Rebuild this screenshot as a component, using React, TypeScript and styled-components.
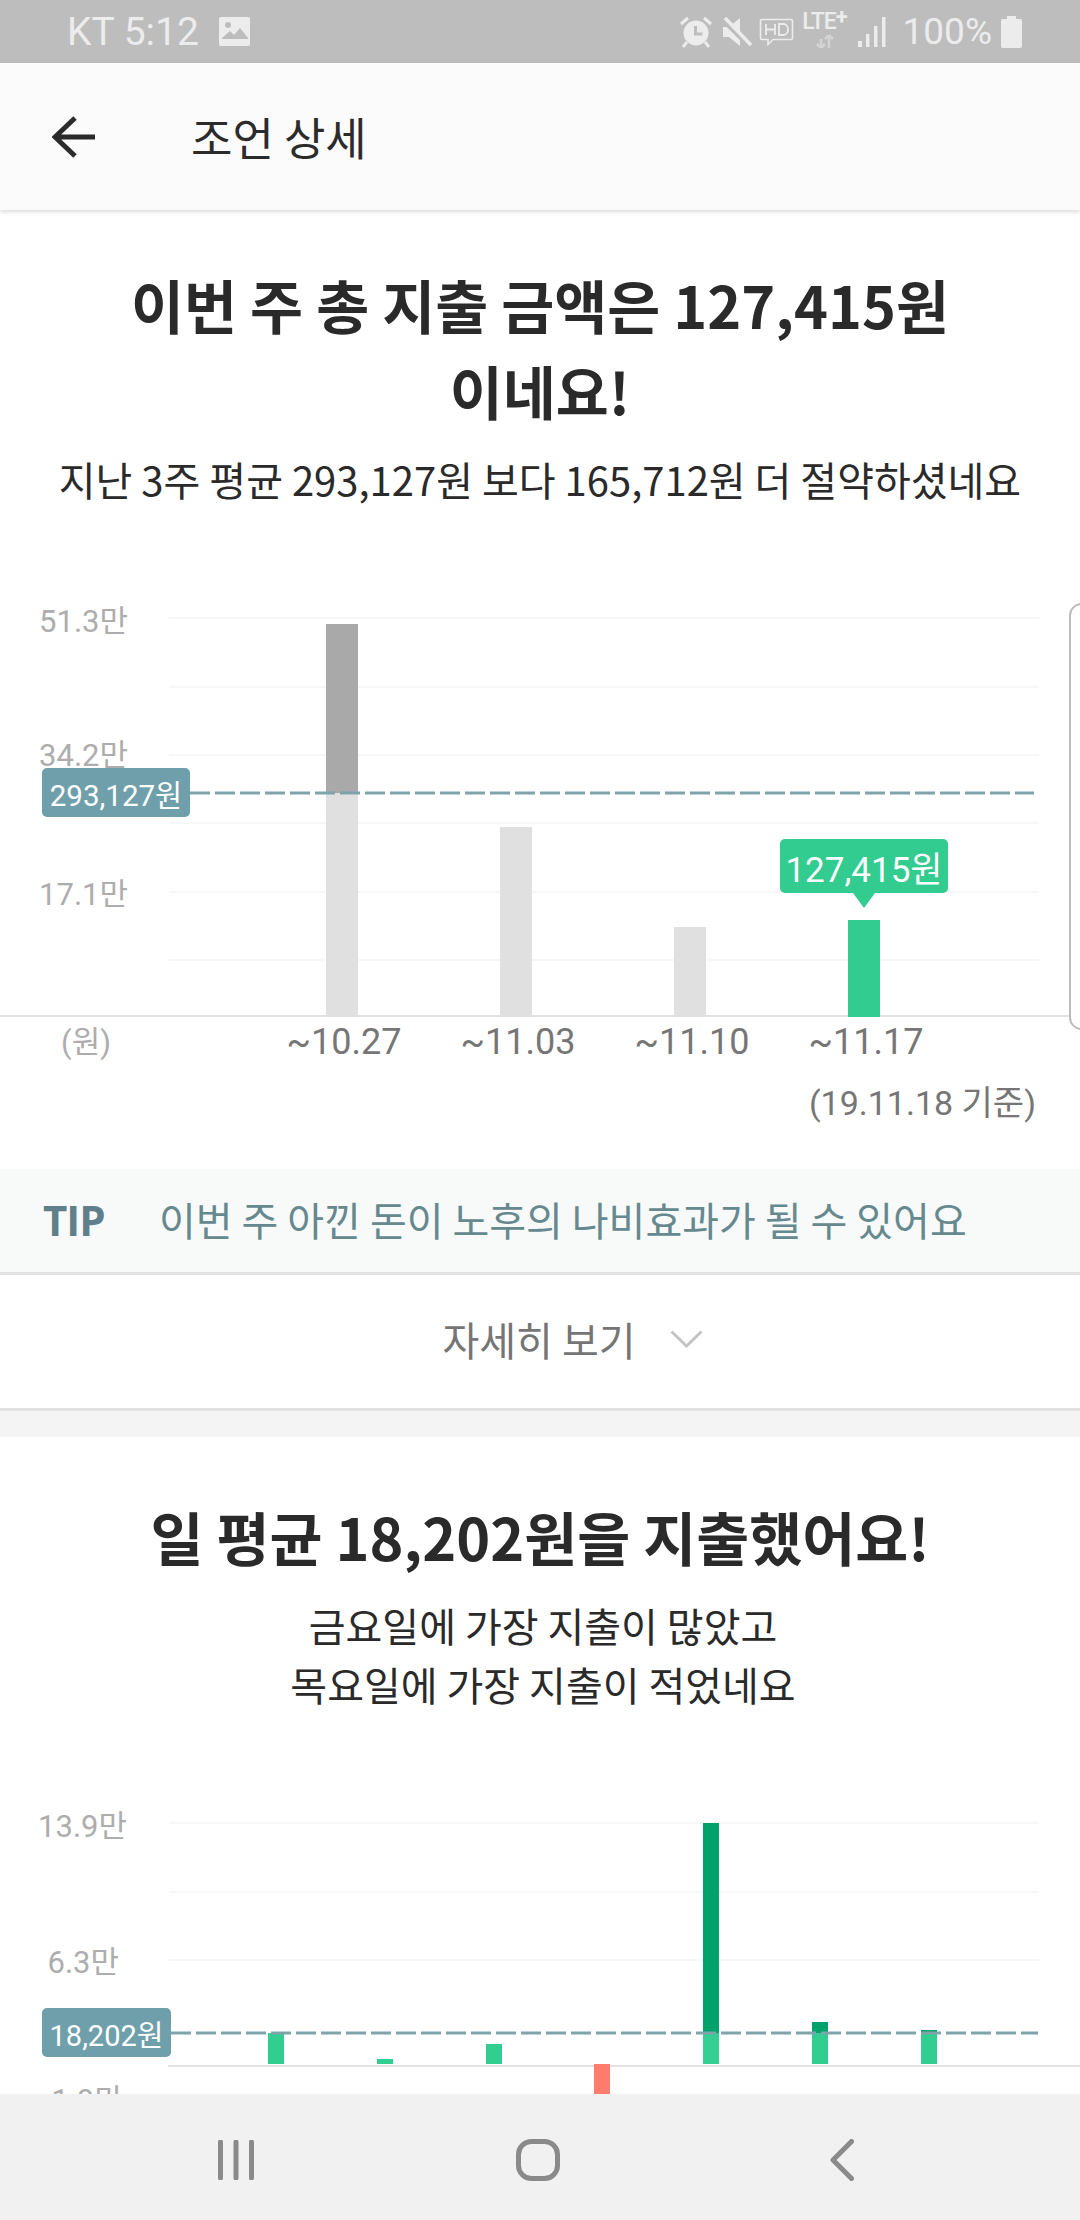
import * as React from 'react';
import styled, { createGlobalStyle } from 'styled-components';

const GlobalStyle = createGlobalStyle`
  html, body {
    margin: 0;
    padding: 0;
    background: #ffffff;
  }
  * {
    box-sizing: border-box;
  }
`;

const KR = `"Noto Sans CJK KR", "Noto Sans", sans-serif`;
const NUM = `Roboto, "Noto Sans CJK KR", sans-serif`;

const Screen = styled.div`
  width: 1080px;
  height: 2220px;
  display: flex;
  flex-direction: column;
  overflow: hidden;
  font-family: ${KR};
  background: #ffffff;
  position: relative;
`;

const StatusBar = styled.div`
  height: 63px;
  flex: none;
  display: flex;
  align-items: center;
  padding: 0 58px 0 67px;
  background: #bdbdbd;
  color: #ececec;
  font-family: ${NUM};
  font-size: 39px;
`;

const Carrier = styled.span`
  margin-right: 20px;
`;

const StatusRight = styled.div`
  margin-left: auto;
  display: flex;
  align-items: center;
`;

const Percent = styled.span`
  margin: 0 9px 0 17px;
  font-size: 37px;
`;

const LteBox = styled.div`
  width: 50px;
  height: 46px;
  margin: 0 8px 0 6px;
  display: flex;
  flex-direction: column;
  align-items: center;
`;

const LteText = styled.span`
  font-size: 23px;
  line-height: 26px;
  font-weight: 500;
  letter-spacing: -1px;
`;

const LtePlus = styled.span`
  position: relative;
  top: -5px;
  font-size: 22px;
  font-weight: 700;
`;

const Header = styled.header`
  height: 147px;
  flex: none;
  display: flex;
  align-items: center;
  padding-left: 52px;
  background: #fbfbfb;
  box-shadow: 0 2px 4px rgba(0, 0, 0, 0.14);
  position: relative;
  z-index: 2;
`;

const HeaderTitle = styled.h1`
  margin: 0 0 0 95px;
  font-size: 45px;
  font-weight: 400;
  color: #2b2b2b;
`;

const Scroller = styled.main`
  flex: 1;
  min-height: 0;
  overflow: hidden;
`;

const Section = styled.section<{ $top: number }>`
  padding-top: ${(p) => p.$top}px;
  background: #ffffff;
`;

const Title = styled.h2`
  margin: 0 auto;
  width: 860px;
  text-align: center;
  font-size: 57.6px;
  line-height: 86px;
  font-weight: 700;
  color: #2a2a2a;
`;

const Lead = styled.p<{ $shift?: number }>`
  margin: 17px 0 0;
  padding-left: ${(p) => p.$shift ?? 0}px;
  text-align: center;
  font-size: 40px;
  line-height: 59px;
  color: #2a2a2a;
`;

const ChartWrap = styled.div<{ $height: number; $top: number }>`
  position: relative;
  height: ${(p) => p.$height}px;
  margin-top: ${(p) => p.$top}px;
`;

const ChartSvg = styled.svg`
  display: block;
  width: 1080px;
  height: 100%;
`;

const AxisLabel = styled.text`
  font-family: ${NUM};
  font-size: 31px;
  fill: #adadad;
  dominant-baseline: central;
`;

const DateLabel = styled.text<{ $size?: number }>`
  font-family: ${NUM};
  font-size: ${(p) => p.$size ?? 36}px;
  fill: #767676;
  dominant-baseline: central;
`;

const Badge = styled.div<{ $left: number; $top: number; $width: number; $height: number; $bg: string; $size: number }>`
  position: absolute;
  left: ${(p) => p.$left}px;
  top: ${(p) => p.$top}px;
  width: ${(p) => p.$width}px;
  height: ${(p) => p.$height}px;
  display: flex;
  align-items: center;
  justify-content: center;
  border-radius: 5px;
  background: ${(p) => p.$bg};
  color: #ffffff;
  font-family: ${NUM};
  font-size: ${(p) => p.$size}px;
  white-space: nowrap;
`;

const BadgeTail = styled.span`
  position: absolute;
  left: 50%;
  top: 100%;
  margin-left: -11px;
  border-left: 11px solid transparent;
  border-right: 11px solid transparent;
  border-top: 15px solid #32cb90;
`;

const EdgeHandle = styled.div`
  position: absolute;
  right: -14px;
  top: 603px;
  width: 25px;
  height: 427px;
  border: 2px solid #bcbcbc;
  border-radius: 16px;
  background: transparent;
  z-index: 1;
`;

const TipBar = styled.div`
  height: 106px;
  display: flex;
  align-items: center;
  padding: 0 0 3px 43px;
  background: #f8fafa;
  border-bottom: 3px solid #e2e2e2;
`;

const TipTag = styled.strong`
  width: 116px;
  font-family: "Open Sans", sans-serif;
  font-size: 42px;
  font-weight: 700;
  letter-spacing: -1px;
  color: #5f808b;
`;

const TipText = styled.span`
  font-size: 40px;
  color: #66898f;
`;

const MoreRow = styled.div`
  height: 136px;
  display: flex;
  align-items: center;
  justify-content: center;
  gap: 35px;
  padding: 0 0 5px 66px;
  border-bottom: 3px solid #e2e2e2;
  font-size: 40px;
  color: #757575;
`;

const Gap = styled.div`
  height: 26px;
  background: #f4f4f4;
`;

const NavBar = styled.nav`
  height: 126px;
  flex: none;
  display: flex;
  align-items: center;
  padding: 6px 0 0 218px;
  background: #f1f1f1;
  position: relative;
  z-index: 2;
`;

const NavIcon = styled.svg<{ $gap: number }>`
  flex: none;
  margin-right: ${(p) => p.$gap}px;
`;

const StatusIcon = styled.svg<{ $ml?: number }>`
  flex: none;
  margin-left: ${(p) => p.$ml ?? 0}px;
`;

interface BarData {
  x: number;
  top: number;
  bottom: number;
  color: string;
  over?: { top: number; color: string };
}

interface ChartProps {
  bars: BarData[];
  barWidth: number;
  grid: number[];
  gridEnd: number;
  axisX: number;
  axisY: number;
  axisEnd: number;
  avgY: number;
  avgX: number;
  avgEnd: number;
  height: number;
  children?: React.ReactNode;
}

const BarChart = ({ bars, barWidth, grid, gridEnd, axisX, axisY, axisEnd, avgY, avgX, avgEnd, height, children }: ChartProps) => (
  <ChartSvg viewBox={`0 0 1080 ${height}`}>
    {grid.map((y) => (
      <line key={y} x1={169} x2={gridEnd} y1={y} y2={y} stroke="#f5f5f5" strokeWidth={1.5} />
    ))}
    <line x1={axisX} x2={axisEnd} y1={axisY} y2={axisY} stroke="#e2e2e2" strokeWidth={2} />
    {bars.map((b) => (
      <g key={b.x}>
        <rect x={b.x} y={b.top} width={barWidth} height={b.bottom - b.top} fill={b.color} />
        {b.over && <rect x={b.x} y={b.over.top} width={barWidth} height={b.top - b.over.top} fill={b.over.color} />}
      </g>
    ))}
    <line x1={avgX} x2={avgEnd} y1={avgY} y2={avgY} stroke="#7ea4a9" strokeWidth={3} strokeDasharray="20 5" />
    {children}
  </ChartSvg>
);

const weekBars: BarData[] = [
  { x: 326, top: 213, bottom: 437, color: '#e0e0e0', over: { top: 44, color: '#a9a9a9' } },
  { x: 500, top: 247, bottom: 437, color: '#e0e0e0' },
  { x: 674, top: 347, bottom: 437, color: '#e0e0e0' },
  { x: 848, top: 340, bottom: 437, color: '#32cb90' },
];

const dayBars: BarData[] = [
  { x: 268, top: 319, bottom: 350, color: '#32cd91' },
  { x: 377, top: 345, bottom: 350, color: '#32cd91' },
  { x: 486, top: 330, bottom: 350, color: '#32cd91' },
  { x: 594, top: 350, bottom: 400, color: '#ff7b6e' },
  { x: 703, top: 319, bottom: 350, color: '#35cf94', over: { top: 109, color: '#00a26c' } },
  { x: 812, top: 319, bottom: 350, color: '#32cd91', over: { top: 308, color: '#00a26c' } },
  { x: 921, top: 319, bottom: 350, color: '#32cd91', over: { top: 316, color: '#00a26c' } },
];

const AlarmIcon = () => (
  <StatusIcon width="32" height="32" viewBox="0 0 32 32" $ml={0}>
    <circle cx="16" cy="17" r="12.5" fill="#ececec" />
    <path d="M15.5 10v8h7" fill="none" stroke="#bdbdbd" strokeWidth="3" />
    <path d="M1 8l7-6M31 8l-7-6M7 26l-4 5M25 26l4 5" stroke="#ececec" strokeWidth="3" />
  </StatusIcon>
);

const MuteIcon = () => (
  <StatusIcon width="30" height="30" viewBox="0 0 30 30" $ml={10}>
    <path d="M1 10h6l11-9v28L7 20H1z" fill="#ececec" />
    <path d="M2 3l26 26" stroke="#bdbdbd" strokeWidth="6" />
    <path d="M3 1l26 27" stroke="#ececec" strokeWidth="3.5" />
  </StatusIcon>
);

const HdIcon = () => (
  <StatusIcon width="35" height="28" viewBox="0 0 35 28" $ml={7}>
    <path d="M3 1.5h29a1.5 1.5 0 0 1 1.5 1.500v17a1.500 1.500 0 0 1-1.500 1.500H14l-5 5v-5H3A1.500 1.500 0 0 1 1.500 20V3A1.500 1.500 0 0 1 3 1.500z" fill="none" stroke="#ececec" strokeWidth="1.6" />
    <path d="M7 6v11M16 6v11M7 11.500h9M20 6v11h4.500c6 0 6-11 0-11z" fill="none" stroke="#ececec" strokeWidth="1.8" />
  </StatusIcon>
);

const ArrowsIcon = () => (
  <svg width="20" height="13" viewBox="0 0 20 13">
    <path d="M6 13V4M2 9l4 4 4-4" fill="none" stroke="#d4d4d4" strokeWidth="2.500" />
    <path d="M14 0v13M10 4l4-4 4 4" fill="none" stroke="#d4d4d4" strokeWidth="2.500" />
  </svg>
);

const SignalIcon = () => (
  <StatusIcon width="28" height="30" viewBox="0 0 28 30">
    <rect x="0" y="24" width="4" height="6" fill="#ececec" />
    <rect x="8" y="17" width="3.500" height="13" fill="#ececec" />
    <rect x="16" y="9" width="3.500" height="21" fill="#ececec" />
    <rect x="24" y="0" width="3.500" height="30" fill="#ececec" />
  </StatusIcon>
);

const BatteryIcon = () => (
  <StatusIcon width="21" height="32" viewBox="0 0 21 32">
    <path d="M6 0h9v3h4a2 2 0 0 1 2 2v25a2 2 0 0 1-2 2H2a2 2 0 0 1-2-2V5a2 2 0 0 1 2-2h4z" fill="#ececec" />
  </StatusIcon>
);

const PictureIcon = () => (
  <svg width="31" height="29" viewBox="0 0 31 29">
    <rect width="31" height="29" rx="2" fill="#ececec" />
    <circle cx="9" cy="8" r="3" fill="#bdbdbd" />
    <path d="M3 21l8-7 4 4 6-7 8 10v1H3z" fill="#bdbdbd" />
  </svg>
);

export default function App() {
  return (
    <Screen>
      <GlobalStyle />
      <StatusBar>
        <Carrier>KT 5:12</Carrier>
        <PictureIcon />
        <StatusRight>
          <AlarmIcon />
          <MuteIcon />
          <HdIcon />
          <LteBox>
            <LteText>
              LTE<LtePlus>+</LtePlus>
            </LteText>
            <ArrowsIcon />
          </LteBox>
          <SignalIcon />
          <Percent>100%</Percent>
          <BatteryIcon />
        </StatusRight>
      </StatusBar>

      <Header>
        <svg width="44" height="42" viewBox="0 0 44 42">
          <path d="M43 21H4M23 2L3 21l20 19" fill="none" stroke="#2b2b2b" strokeWidth="5" />
        </svg>
        <HeaderTitle>조언 상세</HeaderTitle>
      </Header>

      <Scroller>
        <Section $top={51}>
          <Title>이번 주 총 지출 금액은 127,415원 이네요!</Title>
          <Lead>지난 3주 평균 293,127원 보다 165,712원 더 절약하셨네요</Lead>
          <ChartWrap $height={589} $top={71}>
            <BarChart
              bars={weekBars}
              barWidth={32}
              grid={[38, 107, 175, 243, 312, 380]}
              gridEnd={1039}
              axisX={0}
              axisY={436}
              axisEnd={1069}
              avgY={213}
              avgX={190}
              avgEnd={1034}
              height={589}
            >
              <AxisLabel x={128} y={41} textAnchor="end">51.3만</AxisLabel>
              <AxisLabel x={128} y={175} textAnchor="end">34.2만</AxisLabel>
              <AxisLabel x={128} y={314} textAnchor="end">17.1만</AxisLabel>
              <AxisLabel x={86} y={462} textAnchor="middle">(원)</AxisLabel>
              <DateLabel x={344} y={462} textAnchor="middle">~10.27</DateLabel>
              <DateLabel x={518} y={462} textAnchor="middle">~11.03</DateLabel>
              <DateLabel x={692} y={462} textAnchor="middle">~11.10</DateLabel>
              <DateLabel x={866} y={462} textAnchor="middle">~11.17</DateLabel>
              <DateLabel $size={34} x={1036} y={523} textAnchor="end">(19.11.18 기준)</DateLabel>
            </BarChart>
            <Badge $left={42} $top={188} $width={148} $height={49} $bg="#6f9fab" $size={29.5}>293,127원</Badge>
            <Badge $left={780} $top={259} $width={168} $height={54} $bg="#32cb90" $size={35}>
              127,415원
              <BadgeTail />
            </Badge>
          </ChartWrap>
          <TipBar>
            <TipTag>TIP</TipTag>
            <TipText>이번 주 아낀 돈이 노후의 나비효과가 될 수 있어요</TipText>
          </TipBar>
          <MoreRow>
            자세히 보기
            <svg width="33" height="18" viewBox="0 0 33 18">
              <path d="M1.500 1.500L16.500 16l15-14.500" fill="none" stroke="#c4c4c4" strokeWidth="3" />
            </svg>
          </MoreRow>
          <Gap />
        </Section>

        <Section $top={56}>
          <Title>일 평균 18,202원을 지출했어요!</Title>
          <Lead $shift={6}>
            금요일에 가장 지출이 많았고
            <br />
            목요일에 가장 지출이 적었네요
          </Lead>
          <ChartWrap $height={400} $top={0}>
            <BarChart
              bars={dayBars}
              barWidth={16}
              grid={[109, 178, 246]}
              gridEnd={1039}
              axisX={168}
              axisY={352}
              axisEnd={1080}
              avgY={319}
              avgX={171}
              avgEnd={1038}
              height={400}
            >
              <AxisLabel x={127} y={112} textAnchor="end">13.9만</AxisLabel>
              <AxisLabel x={119} y={248} textAnchor="end">6.3만</AxisLabel>
              <AxisLabel x={123} y={386} textAnchor="end">1.9만</AxisLabel>
            </BarChart>
            <Badge $left={42} $top={294} $width={129} $height={49} $bg="#6f9fab" $size={29}>18,202원</Badge>
          </ChartWrap>
        </Section>
      </Scroller>

      <EdgeHandle />

      <NavBar>
        <NavIcon $gap={262} width="36" height="40" viewBox="0 0 36 40">
          <path d="M2.500 2v36M18 2v36M33.500 2v36" stroke="#8a8a8a" strokeWidth="5" strokeLinecap="round" />
        </NavIcon>
        <NavIcon $gap={270} width="44" height="42" viewBox="0 0 44 42">
          <rect x="2.500" y="2.500" width="39" height="37" rx="13" fill="none" stroke="#8a8a8a" strokeWidth="5" />
        </NavIcon>
        <NavIcon $gap={0} width="24" height="42" viewBox="0 0 24 42">
          <path d="M21.500 2.500L3 21l18.500 18.500" fill="none" stroke="#8a8a8a" strokeWidth="5" strokeLinecap="round" strokeLinejoin="round" />
        </NavIcon>
      </NavBar>
    </Screen>
  );
}
